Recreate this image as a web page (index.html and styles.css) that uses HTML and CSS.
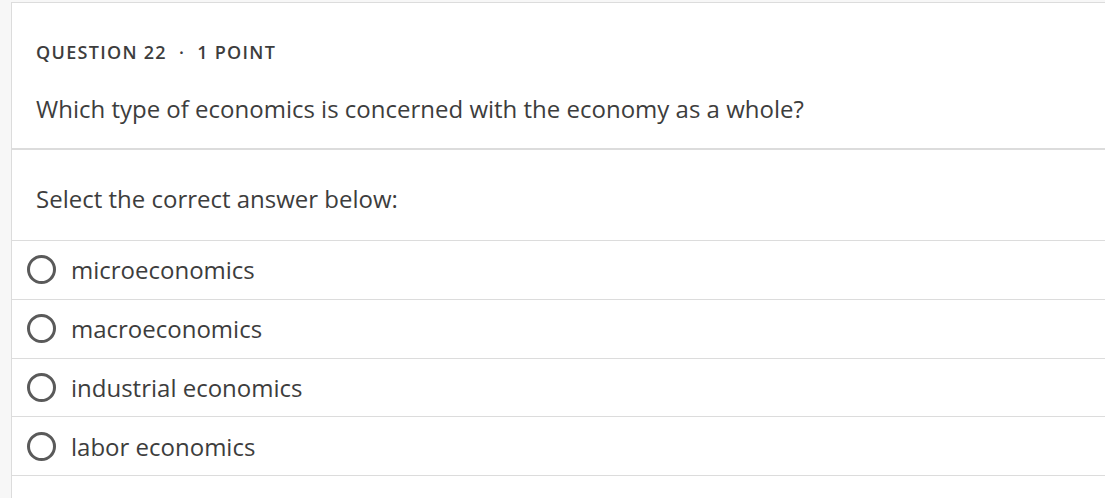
FILE: index.html
```html
<!DOCTYPE html>
<html>
<head>
  <title>Question 22</title>
  <link rel="stylesheet" href="styles.css">
</head>
<body>
  <div class="card">
    <div class="question">
      <div class="meta">QUESTION 22 <span class="dot">&middot;</span> 1 POINT</div>
      <div class="prompt">Which type of economics is concerned with the economy as a whole?</div>
    </div>
    <div class="answers">
      <div class="instructions">Select the correct answer below:</div>
      <label class="option"><span class="radio"></span>microeconomics</label>
      <label class="option"><span class="radio"></span>macroeconomics</label>
      <label class="option"><span class="radio"></span>industrial economics</label>
      <label class="option"><span class="radio"></span>labor economics</label>
    </div>
  </div>
</body>
</html>
```

FILE: styles.css
```css
body {
  margin: 0;
  padding: 2px 0 0 11px;
  background: #f7f7f7;
  font-family: "Open Sans", sans-serif;
  color: #3d3d3d;
  overflow: hidden;
  height: 498px;
  box-sizing: border-box;
}

.card {
  background: #fff;
  border-top: 1px solid #dcdcdc;
  border-left: 1px solid #dcdcdc;
  height: 100%;
}

.question {
  padding: 36px 24px 0 24px;
  height: 109px;
  border-bottom: 2px solid #dcdcdc;
}

.meta {
  font-size: 18px;
  font-weight: 600;
  letter-spacing: 1.3px;
  line-height: 26px;
}

.meta .dot {
  margin: 0 6px;
}

.prompt {
  margin-top: 27px;
  font-size: 24px;
  line-height: 33px;
}

.instructions {
  font-size: 24px;
  line-height: 33px;
  padding: 32px 24px 25px 24px;
  border-bottom: 1px solid #dcdcdc;
}

.option {
  display: flex;
  align-items: center;
  height: 57.75px;
  border-bottom: 1px solid #dcdcdc;
  font-size: 24px;
  padding-left: 15px;
}

.radio {
  width: 23px;
  height: 23px;
  border: 3px solid #5a5a5a;
  border-radius: 50%;
  margin-right: 15px;
  flex-shrink: 0;
}
```
